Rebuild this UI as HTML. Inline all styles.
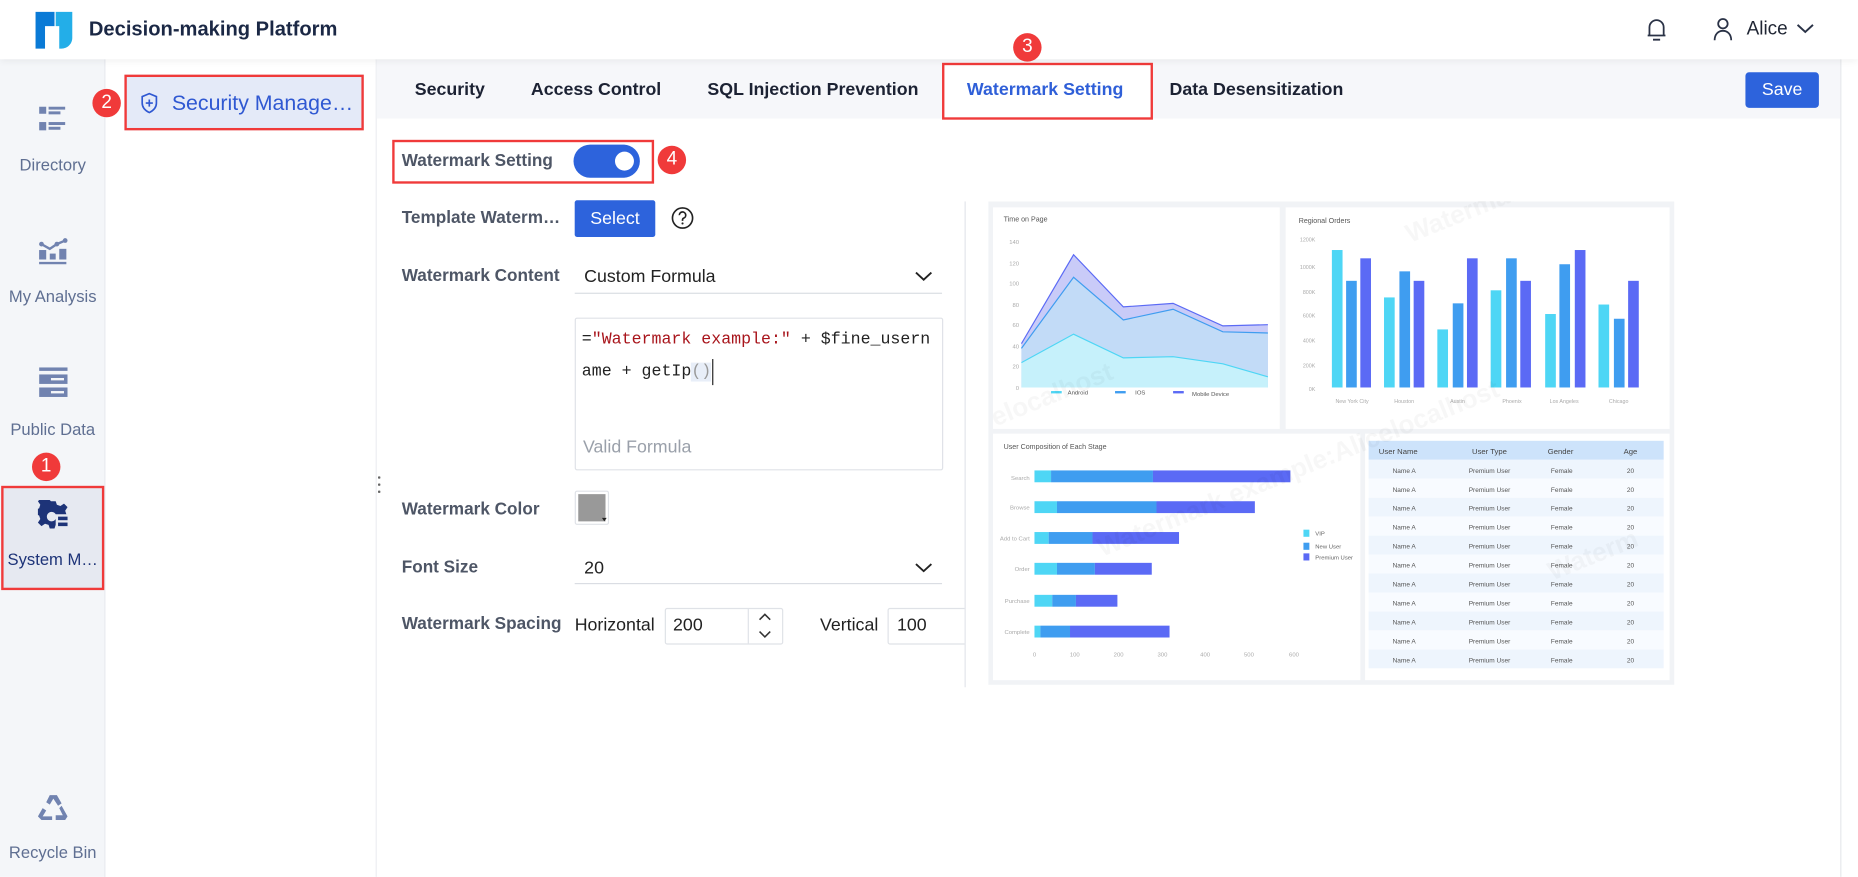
<!DOCTYPE html>
<html><head><meta charset="utf-8"><style>
*{box-sizing:border-box;margin:0;padding:0}
html,body{width:1858px;height:877px;overflow:hidden;background:#fff}
#w{position:absolute;left:0;top:0;width:1568px;height:740px;transform:scale(1.18495);transform-origin:0 0;font-family:"Liberation Sans",Arial,sans-serif;color:#222}
.a{position:absolute}
.hdr{left:0;top:0;width:1568px;height:50px;background:#fff;box-shadow:0 2px 6px rgba(0,0,0,.06);z-index:2}
.side{left:0;top:50px;width:89px;height:690px;background:#f4f6f9;border-right:1px solid #e8eaef}
.sl{width:89px;text-align:center;font-size:14px;color:#5f6f92}
.p2{left:89px;top:50px;width:229px;height:690px;background:#fff;border-right:1px solid #eceef2}
.tabs{left:318px;top:50px;width:1235px;height:50px;background:#f6f7fa}
.tab{top:67px;font-size:15px;font-weight:bold;color:#1c2233}
.lbl{font-size:14.5px;font-weight:bold;color:#4e5666}
.red{border:2px solid #f03a3a}
.badge{width:24px;height:24px;border-radius:50%;background:#f03a3a;color:#fff;font-size:16px;text-align:center;line-height:24px}
.mono{font-family:"Liberation Mono",monospace;font-size:14px;color:#222}
</style></head><body><div id="w">
<div class="a hdr">
 <svg class="a" style="left:27px;top:8px" width="37" height="35" viewBox="0 0 37 35"><path d="M3 2h16v12h-8v19H3z" fill="#0a7ad6"/><path d="M22 2h12v22c0 5-4 9-9 9h-2V14h-3V2z" fill="#23aee8"/></svg>
 <div class="a" style="left:75px;top:15px;font-size:17px;font-weight:bold;color:#1b2845">Decision-making Platform</div>
 <svg class="a" style="left:1389px;top:15px" width="18" height="20" viewBox="0 0 18 20" fill="none" stroke="#2a3246" stroke-width="1.5"><path d="M3 15V8a6 6 0 0 1 12 0v7M1.5 15h15M6 18.5h6"/></svg>
 <svg class="a" style="left:1445px;top:14px" width="18" height="21" viewBox="0 0 18 21" fill="none" stroke="#2a3246" stroke-width="1.5"><circle cx="9" cy="6" r="4"/><path d="M2 20c0-5 3-8 7-8s7 3 7 8"/></svg>
 <div class="a" style="left:1474px;top:16px;font-size:16px;color:#1f2533">Alice</div>
 <svg class="a" style="left:1516px;top:19px" width="15" height="10" viewBox="0 0 15 10" fill="none" stroke="#2a3246" stroke-width="1.6"><path d="M1 2l6.5 6L14 2"/></svg>
</div>
<div class="a side">
 <svg class="a" style="left:33px;top:40px" width="24" height="22" viewBox="0 0 24 22" fill="#7183b0"><rect x="0" y="0" width="6" height="6"/><rect x="8" y="0" width="14" height="2.5"/><rect x="8" y="4" width="10" height="2.5"/><rect x="0" y="13" width="6" height="7"/><rect x="8" y="13" width="14" height="2.5"/><rect x="8" y="17" width="10" height="2.5"/></svg>
 <div class="a sl" style="top:81px">Directory</div>
 <svg class="a" style="left:32px;top:150px" width="26" height="24" viewBox="0 0 26 24"><path d="M3 6l7 4 6-4 7-3" stroke="#7183b0" stroke-width="2" fill="none"/><circle cx="3" cy="6" r="2" fill="#7183b0"/><circle cx="16" cy="6" r="2" fill="#7183b0"/><circle cx="23" cy="3" r="2" fill="#7183b0"/><rect x="1" y="11" width="6" height="8" fill="#7183b0"/><rect x="10" y="14" width="5" height="5" fill="#7183b0"/><rect x="18" y="10" width="6" height="9" fill="#7183b0"/><rect x="1" y="21" width="23" height="2" fill="#7183b0"/></svg>
 <div class="a sl" style="top:192px">My Analysis</div>
 <svg class="a" style="left:33px;top:260px" width="24" height="26" viewBox="0 0 24 26" fill="#7183b0"><rect x="0" y="0" width="24" height="3"/><rect x="0" y="6" width="24" height="8"/><rect x="0" y="17" width="24" height="8"/><rect x="10" y="9" width="11" height="2" fill="#f4f6f9"/><rect x="10" y="20" width="11" height="2" fill="#f4f6f9"/></svg>
 <div class="a sl" style="top:304px">Public Data</div>
 <div class="a" style="left:1px;top:360px;width:87px;height:88px;background:#e6e9f1;border:2px solid #f03a3a"></div>
 <div class="a badge" style="left:27px;top:332px">1</div>
 <svg class="a" style="left:32px;top:372px" width="26" height="26" viewBox="0 0 26 26"><path d="M11 1h4l1 3 3 1 3-2 3 3-2 3 1 3h-9a4 4 0 1 0 0 4h0v5l-1 3h-4l-1-3-3-1-3 2-3-3 2-3-1-3-3-1v-4l3-1 1-3-2-3 3-3 3 2 3-1z" fill="#1d3378"/><rect x="17" y="14" width="8" height="3" fill="#1d3378"/><rect x="17" y="19" width="8" height="3" fill="#1d3378"/></svg>
 <div class="a sl" style="top:414px;color:#1d3378;white-space:nowrap">System M…</div>
 <svg class="a" style="left:32px;top:620px" width="26" height="22" viewBox="0 0 26 22" fill="#7183b0"><path d="M10 1h6l4 7-3 2-4-6-3 5-3-2z"/><path d="M20 10l5 9-2 3h-8v-4h6l-3-6z"/><path d="M4 12l3 2-3 5h8v3H3l-3-3z"/></svg>
 <div class="a sl" style="top:661px">Recycle Bin</div>
</div>
<div class="a p2">
 <div class="a" style="left:16px;top:13px;width:202px;height:47px;background:#e4eaf8;border:2px solid #f03a3a"></div>
 <svg class="a" style="left:29px;top:28px" width="16" height="18" viewBox="0 0 16 18" fill="none" stroke="#2f58d2" stroke-width="1.4"><path d="M8 1l6 2.5V9c0 4-3 6.5-6 8-3-1.5-6-4-6-8V3.5z"/><path d="M8 6v6M5 9h6"/></svg>
 <div class="a" style="left:56px;top:27px;font-size:18px;color:#2f58d2">Security Manage…</div>
 <div class="a badge" style="top:25px;left:-11px">2</div>
</div>
<div class="a tabs"></div>
<div class="a" style="left:1553px;top:50px;width:15px;height:690px;background:#fff;border-left:1px solid #e6e8ec"></div>
<div class="a tab" style="left:350px">Security</div>
<div class="a tab" style="left:448px">Access Control</div>
<div class="a tab" style="left:597px">SQL Injection Prevention</div>
<div class="a" style="left:795px;top:53px;width:178px;height:48px;background:#fff;border:2px solid #f03a3a"></div>
<div class="a tab" style="left:816px;color:#2f5fd8">Watermark Setting</div>
<div class="a badge" style="left:855px;top:28px;z-index:5">3</div>
<div class="a tab" style="left:987px">Data Desensitization</div>
<div class="a" style="left:1473px;top:61px;width:62px;height:30px;background:#2d63dc;border-radius:3px;color:#fff;font-size:15px;text-align:center;line-height:30px">Save</div>

<div class="a red" style="left:331px;top:118px;width:221px;height:37px"></div>
<div class="a lbl" style="left:339px;top:128px">Watermark Setting</div>
<div class="a" style="left:484px;top:122px;width:56px;height:28px;border-radius:14px;background:#2d63dc"></div>
<div class="a" style="left:519px;top:128px;width:16px;height:16px;border-radius:50%;background:#fff"></div>
<div class="a badge" style="left:555px;top:123px">4</div>

<div class="a lbl" style="left:339px;top:176px">Template Waterm…</div>
<div class="a" style="left:485px;top:169px;width:68px;height:31px;background:#2d63dc;border-radius:2px;color:#fff;font-size:15px;text-align:center;line-height:31px">Select</div>
<svg class="a" style="left:566px;top:174px" width="20" height="20" viewBox="0 0 20 20"><circle cx="10" cy="10" r="8.5" fill="none" stroke="#222" stroke-width="1.4"/><path d="M7.3 7.6a2.7 2.7 0 1 1 3.7 2.5c-.7.3-1 .8-1 1.5v.8" fill="none" stroke="#222" stroke-width="1.4"/><circle cx="10" cy="14.6" r=".9" fill="#222"/></svg>

<div class="a lbl" style="left:339px;top:225px">Watermark Content</div>
<div class="a" style="left:493px;top:225px;font-size:15px">Custom Formula</div>
<svg class="a" style="left:772px;top:228px" width="15" height="10" viewBox="0 0 15 10" fill="none" stroke="#222" stroke-width="1.6"><path d="M1 2l6.5 6L14 2"/></svg>
<div class="a" style="left:485px;top:247px;width:310px;height:1px;background:#dadde3"></div>

<div class="a" style="left:485px;top:268px;width:311px;height:129px;border:1px solid #dfe2e7;border-radius:2px"></div>
<div class="a mono" style="left:491px;top:279px;white-space:pre">=<span style="color:#a8141b">"Watermark example:"</span> + $fine_usern</div>
<div class="a mono" style="left:491px;top:306px;white-space:pre">ame + getIp<span style="color:#999;background:#e8eef8">()</span></div>
<div class="a" style="left:601px;top:303px;width:1px;height:22px;background:#222"></div>
<div class="a" style="left:492px;top:369px;font-size:15px;color:#9aa0aa">Valid Formula</div>
<div class="a" style="left:319px;top:400px;width:2px;height:18px;background:radial-gradient(circle,#666 1px,transparent 1.2px) 0 0/2px 6px"></div>

<div class="a lbl" style="left:339px;top:422px">Watermark Color</div>
<div class="a" style="left:485px;top:414px;width:29px;height:29px;border:1px solid #dfe2e7;border-radius:2px;background:#fff"></div>
<div class="a" style="left:488px;top:417px;width:23px;height:23px;background:#999"></div>
<div class="a" style="left:508px;top:437px;width:0;height:0;border-left:2.5px solid transparent;border-right:2.5px solid transparent;border-top:3px solid #222"></div>

<div class="a lbl" style="left:339px;top:471px">Font Size</div>
<div class="a" style="left:493px;top:471px;font-size:15px">20</div>
<svg class="a" style="left:772px;top:474px" width="15" height="10" viewBox="0 0 15 10" fill="none" stroke="#222" stroke-width="1.6"><path d="M1 2l6.5 6L14 2"/></svg>
<div class="a" style="left:485px;top:492px;width:310px;height:1px;background:#dadde3"></div>

<div class="a lbl" style="left:339px;top:519px">Watermark Spacing</div>
<div class="a" style="left:485px;top:519px;font-size:15px">Horizontal</div>
<div class="a" style="left:561px;top:513px;width:100px;height:31px;border:1px solid #dfe2e7;border-radius:2px"></div>
<div class="a" style="left:631px;top:514px;width:1px;height:29px;background:#dfe2e7"></div>
<div class="a" style="left:568px;top:519px;font-size:15px">200</div>
<svg class="a" style="left:639px;top:516px" width="13" height="25" viewBox="0 0 13 25" fill="none" stroke="#333" stroke-width="1.3"><path d="M2 7l4.5-4.5L11 7M2 17l4.5 4.5L11 17"/></svg>
<div class="a" style="left:692px;top:519px;font-size:15px">Vertical</div>
<div class="a" style="left:749px;top:513px;width:80px;height:31px;border:1px solid #dfe2e7;border-radius:2px"></div>
<div class="a" style="left:757px;top:519px;font-size:15px">100</div>
<div class="a" style="left:814px;top:170px;width:20px;height:410px;background:#fff;border-left:1px solid #e3e5ea"></div>

<svg class="a" style="left:834px;top:170px" width="579" height="408" viewBox="834 170 579 408" font-family="Liberation Sans,Arial,sans-serif">
<rect x="834" y="170" width="579" height="408" fill="#f1f3f6"/>
<rect x="838" y="175" width="242" height="187" fill="#fff"/>
<rect x="1085" y="175" width="324" height="187" fill="#fff"/>
<rect x="838" y="366" width="310" height="208" fill="#fff"/>
<rect x="1152" y="366" width="257" height="208" fill="#fff"/>
<g font-size="6" fill="#555"><text x="847" y="187">Time on Page</text><text x="1096" y="188">Regional Orders</text><text x="847" y="379">User Composition of Each Stage</text></g>
<g font-size="5" fill="#aaa" text-anchor="end">
<text x="860" y="206">140</text><text x="860" y="224">120</text><text x="860" y="241">100</text><text x="860" y="259">80</text><text x="860" y="276">60</text><text x="860" y="294">40</text><text x="860" y="311">20</text><text x="860" y="329">0</text>
</g>
<path d="M862 290L906 215 948 259 990 256 1032 275 1070 274V327H862z" fill="#c9cbf8"/>
<path d="M862 294L906 234 948 270 990 261 1032 280 1070 281V327H862z" fill="#c2dbf7"/>
<path d="M862 306L906 282 948 302 990 301 1032 307 1070 318V327H862z" fill="#c6f1fb"/>
<path d="M862 290L906 215 948 259 990 256 1032 275 1070 274" stroke="#5b6af5" fill="none"/>
<path d="M862 294L906 234 948 270 990 261 1032 280 1070 281" stroke="#3f9df0" fill="none"/>
<path d="M862 306L906 282 948 302 990 301 1032 307 1070 318" stroke="#4ed6f5" fill="none"/>
<g font-size="5" fill="#555"><rect x="887" y="330" width="9" height="2" fill="#4ed6f5"/><text x="901" y="333">Android</text><rect x="941" y="330" width="9" height="2" fill="#3f9df0"/><text x="958" y="333">IOS</text><rect x="990" y="330" width="9" height="2" fill="#5b6af5"/><text x="1006" y="334">Mobile Device</text></g>
<g font-size="4.5" fill="#aaa" text-anchor="end"><text x="1110" y="204">1200K</text><text x="1110" y="227">1000K</text><text x="1110" y="248">800K</text><text x="1110" y="268">600K</text><text x="1110" y="289">400K</text><text x="1110" y="310">200K</text><text x="1110" y="330">0K</text></g>
<g fill="#4ed6f5"><rect x="1124" y="211" width="9" height="116"/><rect x="1168" y="251" width="9" height="76"/><rect x="1213" y="278" width="9" height="49"/><rect x="1258" y="245" width="9" height="82"/><rect x="1304" y="265" width="9" height="62"/><rect x="1349" y="257" width="9" height="70"/></g>
<g fill="#3f9df0"><rect x="1136" y="237" width="9" height="90"/><rect x="1181" y="229" width="9" height="98"/><rect x="1226" y="256" width="9" height="71"/><rect x="1271" y="218" width="9" height="109"/><rect x="1316" y="223" width="9" height="104"/><rect x="1362" y="269" width="9" height="58"/></g>
<g fill="#5b6af5"><rect x="1148" y="218" width="9" height="109"/><rect x="1193" y="237" width="9" height="90"/><rect x="1238" y="218" width="9" height="109"/><rect x="1283" y="237" width="9" height="90"/><rect x="1329" y="211" width="9" height="116"/><rect x="1374" y="237" width="9" height="90"/></g>
<g font-size="4.5" fill="#aaa" text-anchor="middle"><text x="1141" y="340">New York City</text><text x="1185" y="340">Houston</text><text x="1230" y="340">Austin</text><text x="1276" y="340">Phoenix</text><text x="1320" y="340">Los Angeles</text><text x="1366" y="340">Chicago</text></g>
<g font-size="5" fill="#aaa" text-anchor="end"><text x="869" y="405">Search</text><text x="869" y="430">Browse</text><text x="869" y="456">Add to Cart</text><text x="869" y="482">Order</text><text x="869" y="509">Purchase</text><text x="869" y="535">Complete</text></g>
<g fill="#4ed6f5"><rect x="873" y="397" width="14" height="10"/><rect x="873" y="423" width="19" height="10"/><rect x="873" y="449" width="12" height="10"/><rect x="873" y="475" width="19" height="10"/><rect x="873" y="502" width="15" height="10"/><rect x="873" y="528" width="5" height="10"/></g>
<g fill="#3f9df0"><rect x="887" y="397" width="86" height="10"/><rect x="892" y="423" width="84" height="10"/><rect x="885" y="449" width="37" height="10"/><rect x="892" y="475" width="32" height="10"/><rect x="888" y="502" width="20" height="10"/><rect x="878" y="528" width="25" height="10"/></g>
<g fill="#5b6af5"><rect x="973" y="397" width="116" height="10"/><rect x="976" y="423" width="83" height="10"/><rect x="922" y="449" width="73" height="10"/><rect x="924" y="475" width="48" height="10"/><rect x="908" y="502" width="35" height="10"/><rect x="903" y="528" width="84" height="10"/></g>
<g font-size="5" fill="#aaa" text-anchor="middle"><text x="873" y="554">0</text><text x="907" y="554">100</text><text x="944" y="554">200</text><text x="981" y="554">300</text><text x="1017" y="554">400</text><text x="1054" y="554">500</text><text x="1092" y="554">600</text></g>
<g font-size="5" fill="#666"><rect x="1100" y="447" width="5" height="6" fill="#4ed6f5"/><text x="1110" y="452">VIP</text><rect x="1100" y="458" width="5" height="6" fill="#3f9df0"/><text x="1110" y="463">New User</text><rect x="1100" y="467" width="5" height="6" fill="#5b6af5"/><text x="1110" y="472">Premium User</text></g>
<rect x="1155" y="372" width="249" height="16" fill="#cde3fb"/>
<g fill="#eef5fd"><rect x="1155" y="388" width="249" height="16"/><rect x="1155" y="420" width="249" height="16"/><rect x="1155" y="452" width="249" height="16"/><rect x="1155" y="484" width="249" height="16"/><rect x="1155" y="516" width="249" height="16"/><rect x="1155" y="548" width="249" height="16"/></g>
<g fill="#f8fbff"><rect x="1155" y="404" width="249" height="16"/><rect x="1155" y="436" width="249" height="16"/><rect x="1155" y="468" width="249" height="16"/><rect x="1155" y="500" width="249" height="16"/><rect x="1155" y="532" width="249" height="16"/></g>
<g font-size="6.5" fill="#444" text-anchor="middle"><text x="1180" y="383">User Name</text><text x="1257" y="383">User Type</text><text x="1317" y="383">Gender</text><text x="1376" y="383">Age</text></g>
<g font-size="5.5" fill="#555" text-anchor="middle">
<text x="1185" y="399">Name A</text><text x="1257" y="399">Premium User</text><text x="1318" y="399">Female</text><text x="1376" y="399">20</text>
<text x="1185" y="415">Name A</text><text x="1257" y="415">Premium User</text><text x="1318" y="415">Female</text><text x="1376" y="415">20</text>
<text x="1185" y="431">Name A</text><text x="1257" y="431">Premium User</text><text x="1318" y="431">Female</text><text x="1376" y="431">20</text>
<text x="1185" y="447">Name A</text><text x="1257" y="447">Premium User</text><text x="1318" y="447">Female</text><text x="1376" y="447">20</text>
<text x="1185" y="463">Name A</text><text x="1257" y="463">Premium User</text><text x="1318" y="463">Female</text><text x="1376" y="463">20</text>
<text x="1185" y="479">Name A</text><text x="1257" y="479">Premium User</text><text x="1318" y="479">Female</text><text x="1376" y="479">20</text>
<text x="1185" y="495">Name A</text><text x="1257" y="495">Premium User</text><text x="1318" y="495">Female</text><text x="1376" y="495">20</text>
<text x="1185" y="511">Name A</text><text x="1257" y="511">Premium User</text><text x="1318" y="511">Female</text><text x="1376" y="511">20</text>
<text x="1185" y="527">Name A</text><text x="1257" y="527">Premium User</text><text x="1318" y="527">Female</text><text x="1376" y="527">20</text>
<text x="1185" y="543">Name A</text><text x="1257" y="543">Premium User</text><text x="1318" y="543">Female</text><text x="1376" y="543">20</text>
<text x="1185" y="559">Name A</text><text x="1257" y="559">Premium User</text><text x="1318" y="559">Female</text><text x="1376" y="559">20</text>
</g>
<g font-size="22" font-weight="bold" fill="#000" opacity="0.035">
<text transform="translate(930 470) rotate(-22)">Watermark example:Alicelocalhost</text>
<text transform="translate(840 360) rotate(-22)">elocalhost</text>
<text transform="translate(1190 205) rotate(-22)">Watermark</text>
<text transform="translate(1310 490) rotate(-22)">Waterm</text>
</g>
</svg>
</div></body></html>
